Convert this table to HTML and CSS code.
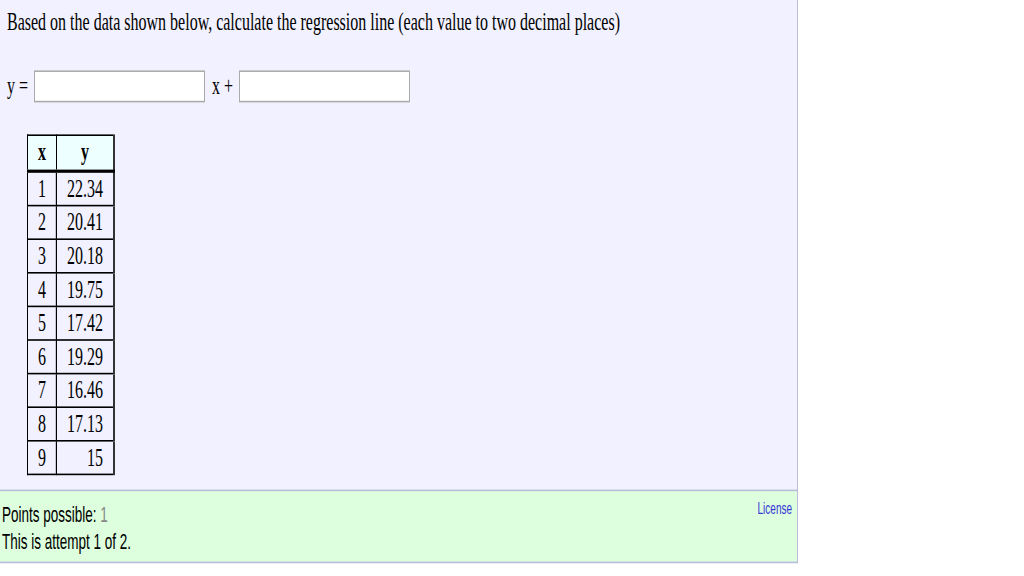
FILE: index.html
```html
<!DOCTYPE html>
<html lang="en">
<head>
<meta charset="utf-8">
<title>Regression question</title>
<link rel="stylesheet" href="styles.css">
</head>
<body>
<div class="page">
  <div class="question">
    <div class="qbody">
      <p class="prompt">Based on the data shown below, calculate the regression line (each value to two decimal places)</p>
      <div class="answer-row">
        <span class="lbl lbl-y">y =</span>
        <input class="ans" type="text" aria-label="slope">
        <span class="lbl lbl-x">x +</span>
        <input class="ans" type="text" aria-label="intercept">
      </div>
      <table class="stats">
        <thead>
          <tr><th class="cx">x</th><th class="cy">y</th></tr>
        </thead>
        <tbody>
          <tr><td class="cx">1</td><td class="cy">22.34</td></tr>
          <tr><td class="cx">2</td><td class="cy">20.41</td></tr>
          <tr><td class="cx">3</td><td class="cy">20.18</td></tr>
          <tr><td class="cx">4</td><td class="cy">19.75</td></tr>
          <tr><td class="cx">5</td><td class="cy">17.42</td></tr>
          <tr><td class="cx">6</td><td class="cy">19.29</td></tr>
          <tr><td class="cx">7</td><td class="cy">16.46</td></tr>
          <tr><td class="cx">8</td><td class="cy">17.13</td></tr>
          <tr><td class="cx">9</td><td class="cy">15</td></tr>
        </tbody>
      </table>
    </div>
    <div class="qfooter">
      <a class="license" href="#">License</a>
      <div class="fline">Points possible: <span class="pts">1</span></div>
      <div class="fline">This is attempt 1 of 2.</div>
    </div>
  </div>
</div>
</body>
</html>
```
FILE: styles.css
```css
body {
  margin: 0;
  padding: 0;
  height: 576px;
  background: #ffffff;
}

/* The reference capture is stretched vertically; the page is laid out
   at natural size and stretched the same way. */
.page {
  transform: scaleY(1.6);
  transform-origin: 0 0;
  font-family: "Liberation Serif", "Times New Roman", serif;
  font-size: 16px;
  color: #000;
}

.question {
  width: 797px;
  background: #f1f1ff;
  border-right: 1px solid #bcbcdc;
}

.qbody {
  padding: 5px 0 8.8px 7px;
}

.prompt {
  margin: 0;
  line-height: 18px;
}

.answer-row {
  display: flex;
  align-items: center;
  margin-top: 20.75px;
  height: 20px;
}

.lbl {
  white-space: pre;
  line-height: 18px;
}

.lbl-y {
  margin-right: 6px;
}

.lbl-x {
  margin-left: 7px;
  margin-right: 6px;
}

.ans {
  box-sizing: border-box;
  width: 171px;
  height: 20px;
  margin: 0;
  padding: 0 2px;
  border: 1px solid #ababab;
  background: #ffffff;
  font-family: "Liberation Sans", Arial, sans-serif;
  font-size: 13px;
}

.stats {
  margin-top: 20.65px;
  margin-left: 20px;
  border-collapse: collapse;
  table-layout: fixed;
  width: 86px;
  border-top: 1px solid #000;
  border-left: 1px solid #000;
  border-bottom: 1px solid #000;
  border-right: 2px solid #333;
}

.stats th,
.stats td {
  border: 1px solid #000;
  padding: 0;
}

.stats th {
  background: #eeffff;
  font-weight: bold;
  line-height: 20.5px;
  text-align: center;
  border-bottom: 2px solid #000;
}

.stats td {
  line-height: 20px;
}

.stats .cx {
  width: 28px;
  text-align: center;
  box-shadow: inset -1px 0 0 #c4c4cc;
}

.stats .cy {
  width: 56px;
}

.stats td.cy {
  text-align: right;
  padding-right: 10px;
}

.stats th.cx,
.stats th.cy {
  border-right-color: #000;
  box-shadow: none;
}

.stats th.cy,
.stats td.cy {
  border-right: 2px solid #333;
}

.qfooter {
  background: #ddffdd;
  border-top: 1px solid #bcbcdc;
  border-bottom: 1px solid #bcbcdc;
  padding: 6.8px 5px 3.2px 2px;
  font-family: "Liberation Sans", Arial, sans-serif;
  font-size: 13.5px;
  line-height: 17px;
  color: #000;
}

.license {
  float: right;
  margin-top: -1px;
  font-size: 10px;
  line-height: 11.5px;
  color: #3535d8;
  text-decoration: none;
}

.fline {
  white-space: nowrap;
}

.pts {
  color: #888;
}
```
